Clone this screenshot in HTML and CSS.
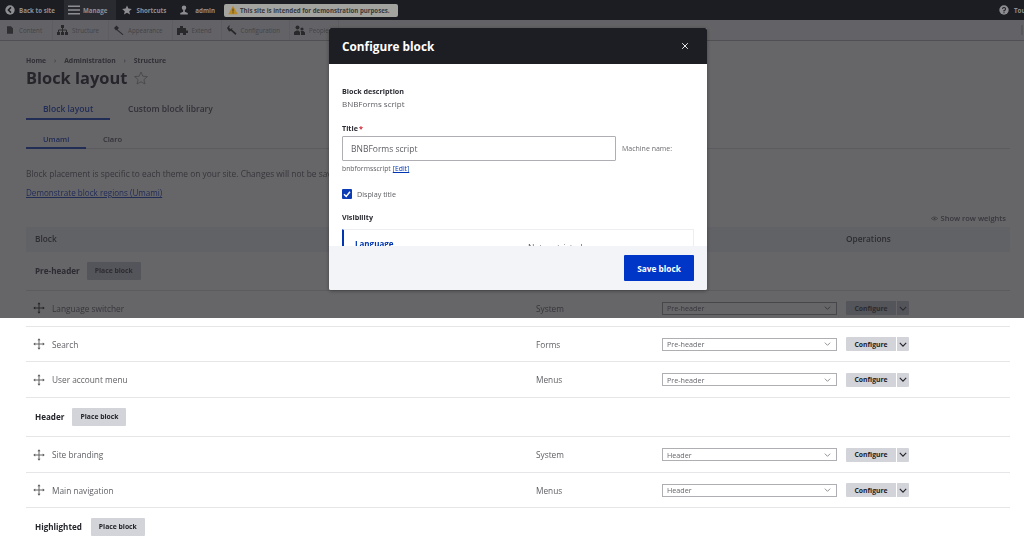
FILE: index.html
```html
<!DOCTYPE html>
<html lang="en">
<head>
<meta charset="utf-8">
<title>Block layout</title>
<link rel="stylesheet" href="styles.css">
</head>
<body>
<svg class="defs" width="0" height="0" aria-hidden="true">
  <symbol id="move" viewBox="0 0 12 12"><path d="M6 .3 7.500 2.200H4.500ZM6 11.700 4.500 9.800H7.500ZM.3 6 2.200 4.500V7.500ZM11.700 6 9.800 7.500V4.500Z" fill="#555"/><path d="M6 2V10M2 6H10" stroke="#555" stroke-width=".9"/></symbol>
  <symbol id="chev" viewBox="0 0 10 6"><path d="M1 1 5 5 9 1" fill="none" stroke="currentColor" stroke-width="1.400"/></symbol>
</svg>

<nav class="topbar">
  <a class="top-item top-back"><svg class="ti" viewBox="0 0 10 10"><circle cx="5" cy="5" r="4.700" fill="#8e8e92"/><path d="M6 2.400 3.400 5 6 7.600" fill="none" stroke="#1c1d22" stroke-width="1.500"/></svg>Back to site</a>
  <a class="top-item top-active"><svg class="ti ti-wide" viewBox="0 0 12 10"><path d="M0 1.200H12M0 5H12M0 8.800H12" stroke="#8e8e92" stroke-width="1.600"/></svg>Manage</a>
  <a class="top-item"><svg class="ti ti-wide" viewBox="0 0 12 12"><path d="M6 .5 7.700 4.300 11.800 4.700 8.700 7.400 9.600 11.500 6 9.400 2.400 11.500 3.300 7.400.2 4.700 4.300 4.300Z" fill="#8e8e92"/></svg>Shortcuts</a>
  <a class="top-item top-user"><svg class="ti ti-wide" viewBox="0 0 12 12"><circle cx="6" cy="3.200" r="2.700" fill="#8e8e92"/><path d="M5 5.500H7V8L10.500 9.500V11.500H1.500V9.500L5 8Z" fill="#8e8e92"/></svg>admin</a>
  <div class="demo-note"><svg class="warn" viewBox="0 0 12 11"><path d="M6 .4 11.700 10.600H.3Z" fill="#b88a2a"/><path d="M6 3.800V7.400M6 8.300V9.500" stroke="#3a2e10" stroke-width="1"/></svg>This site is intended for demonstration purposes.</div>
  <a class="tour"><svg class="ti" viewBox="0 0 10 10"><circle cx="5" cy="5" r="4.700" fill="#8e8e92"/><path d="M3.500 3.900A1.500 1.500 0 1 1 5 5.500V6.400M5 7.200V8.200" fill="none" stroke="#1c1d22" stroke-width="1.100"/></svg>Tour</a>
</nav>

<nav class="adminbar">
  <a class="admin-item"><svg class="ai ai-narrow" viewBox="0 0 7 9"><path d="M0 0H4.500L7 2.500V9H0Z" fill="#777"/></svg>Content</a>
  <a class="admin-item"><svg class="ai" viewBox="0 0 11 10"><path d="M5.500 2V5M1.500 8V5H9.500V8M5.500 5V8" fill="none" stroke="#666" stroke-width="1"/><rect x="4" width="3" height="3" fill="#666"/><rect y="7" width="3" height="3" fill="#666"/><rect x="4" y="7" width="3" height="3" fill="#666"/><rect x="8" y="7" width="3" height="3" fill="#666"/></svg>Structure</a>
  <a class="admin-item"><svg class="ai" viewBox="0 0 11 10"><path d="M1 3 3.500 .5 6 3 4.500 4.500 10.500 9.500 9.500 10 3.500 5 3 5.500Z" fill="#666"/></svg>Appearance</a>
  <a class="admin-item"><svg class="ai" viewBox="0 0 11 10"><path d="M0 3H3V1H6V3H9V5.500H11V8H9V10H6V8H3V10H0Z" fill="#666"/></svg>Extend</a>
  <a class="admin-item"><svg class="ai" viewBox="0 0 11 10"><path d="M1 3 3 .5 4 .5 3 2.500 4.500 4 6.500 3 6 4.500 10.500 8.500 9.500 10 5 6 3 6.500Z" fill="#666"/></svg>Configuration</a>
  <a class="admin-item"><svg class="ai" viewBox="0 0 11 10"><circle cx="3.500" cy="2.500" r="2" fill="#666"/><circle cx="8" cy="4" r="1.600" fill="#666"/><path d="M0 10V7L2.500 5.500H4.500L6 7V10ZM7 10V7L6.500 6H9.500L11 7.500V10Z" fill="#666"/></svg>People</a>
  <span class="admin-end"></span>
</nav>

<main class="page">
  <ol class="crumbs"><li>Home</li><li class="sep">›</li><li>Administration</li><li class="sep">›</li><li>Structure</li></ol>
  <h1 class="page-title">Block layout <svg class="fav" viewBox="0 0 14 14"><path d="M7 1 8.800 5.200 13.400 5.600 9.900 8.600 11 13 7 10.700 3 13 4.100 8.600.6 5.600 5.200 5.200Z" fill="none" stroke="#aaa" stroke-width=".8"/></svg></h1>
  <div class="tabs"><a class="tab tab-on">Block layout</a><a class="tab">Custom block library</a></div>
  <div class="subtabs"><a class="subtab subtab-on">Umami</a><a class="subtab">Claro</a></div>
  <p class="intro">Block placement is specific to each theme on your site. Changes will not be saved until you click Save blocks at the bottom of the page.</p>
  <p class="demo-link"><a>Demonstrate block regions (Umami)</a></p>
  <div class="weights"><svg class="eye" viewBox="0 0 10 6"><path d="M.5 3C2.500.2 7.500.2 9.500 3 7.500 5.800 2.500 5.800.5 3Z" fill="none" stroke="#8a8a90" stroke-width="1"/><circle cx="5" cy="3" r="1.200" fill="#8a8a90"/></svg>Show row weights</div>

  <div class="thead"><span>Block</span><span></span><span></span><span>Operations</span></div>

  <div class="region region-dim"><strong>Pre-header</strong><a class="place">Place block</a></div>
  <div class="row r-first">
    <span class="name"><svg class="handle"><use href="#move"/></svg>Language switcher</span><span>System</span>
    <span class="select">Pre-header<svg class="chev"><use href="#chev"/></svg></span>
    <span class="ops"><a class="op-main">Configure</a><a class="op-more"><svg class="chev-b"><use href="#chev"/></svg></a></span>
  </div>
  <div class="row">
    <span class="name"><svg class="handle"><use href="#move"/></svg>Search</span><span>Forms</span>
    <span class="select">Pre-header<svg class="chev"><use href="#chev"/></svg></span>
    <span class="ops"><a class="op-main">Configure</a><a class="op-more"><svg class="chev-b"><use href="#chev"/></svg></a></span>
  </div>
  <div class="row r-tall">
    <span class="name"><svg class="handle"><use href="#move"/></svg>User account menu</span><span>Menus</span>
    <span class="select">Pre-header<svg class="chev"><use href="#chev"/></svg></span>
    <span class="ops"><a class="op-main">Configure</a><a class="op-more"><svg class="chev-b"><use href="#chev"/></svg></a></span>
  </div>
  <div class="region"><strong>Header</strong><a class="place">Place block</a></div>
  <div class="row r-tall">
    <span class="name"><svg class="handle"><use href="#move"/></svg>Site branding</span><span>System</span>
    <span class="select">Header<svg class="chev"><use href="#chev"/></svg></span>
    <span class="ops"><a class="op-main">Configure</a><a class="op-more"><svg class="chev-b"><use href="#chev"/></svg></a></span>
  </div>
  <div class="row">
    <span class="name"><svg class="handle"><use href="#move"/></svg>Main navigation</span><span>Menus</span>
    <span class="select">Header<svg class="chev"><use href="#chev"/></svg></span>
    <span class="ops"><a class="op-main">Configure</a><a class="op-more"><svg class="chev-b"><use href="#chev"/></svg></a></span>
  </div>
  <div class="region region-last"><strong>Highlighted</strong><a class="place">Place block</a></div>
</main>

<div class="overlay"></div>

<section class="modal">
  <header class="modal-head"><h2>Configure block</h2><svg class="close" viewBox="0 0 8 8"><path d="M1.200 1.200 6.800 6.800M6.800 1.200 1.200 6.800" stroke="#e8e8ea" stroke-width="1"/></svg></header>
  <div class="modal-body">
    <div class="f-label">Block description</div>
    <div class="f-value">BNBForms script</div>
    <div class="f-label f-title">Title<span class="req">*</span></div>
    <div class="title-row"><div class="input">BNBForms script</div><span class="machine">Machine name:</span></div>
    <div class="machine-val"><span>bnbformsscript</span><a>[Edit]</a></div>
    <div class="check-row"><span class="check"><svg viewBox="0 0 10 10"><path d="M2 5.200 4.200 7.400 8 2.800" fill="none" stroke="#fff" stroke-width="1.500"/></svg></span>Display title</div>
    <div class="f-label f-vis">Visibility</div>
    <div class="vis-box"><a class="vis-tab">Language</a><span class="vis-sum">Not restricted</span></div>
  </div>
  <footer class="modal-foot"><a class="save">Save block</a></footer>
</section>
</body>
</html>
```
FILE: styles.css
```css
* { box-sizing: border-box; }
html, body { margin: 0; height: 544px; overflow: hidden; }
body { position: relative; background: #fff; font-family: "Open Sans", "Noto Sans", sans-serif; font-size: 8.3px; color: #606166; font-variant-ligatures: none; filter: blur(.5px); }
.defs { position: absolute; }
a { color: inherit; text-decoration: none; }

/* toolbar */
.topbar { height: 20px; background: #1c1d22; display: flex; align-items: center; font-size: 6.2px; font-weight: 700; color: #909094; white-space: nowrap; overflow: hidden; }
.top-item { display: flex; align-items: center; height: 20px; gap: 3px; padding: 0 7px 0 5px; }
.top-back { gap: 4px; padding-right: 9px; }
.top-active { background: #2a2b30; padding: 0 9px 0 4px; }
.top-user { gap: 5px; }
.ti { width: 10px; height: 10px; flex: none; }
.ti-wide { width: 12px; }
.demo-note { display: flex; align-items: center; gap: 2px; height: 13px; width: 174px; margin-left: 2px; padding-left: 4px; background: #a3a39f; border-radius: 2px; font-size: 6.1px; color: #3a3a3c; flex: none; }
.warn { width: 10px; height: 10px; flex: none; }
.tour { margin-left: auto; margin-right: -6px; width: 31px; display: flex; align-items: center; gap: 5px; flex: none; }

.adminbar { height: 21px; background: #f8f8fa; border-bottom: 1px solid #c8c8ca; display: flex; align-items: center; font-size: 6.2px; color: #a8a8ac; white-space: nowrap; }
.admin-item { display: flex; align-items: center; gap: 4px; height: 20px; padding: 0 9px 0 4px; border-right: 1px solid #ececee; }
.admin-item:first-child { padding: 0 10px 0 7px; gap: 6px; }
.ai { width: 11px; height: 10px; flex: none; }
.ai-narrow { width: 6px; height: 8px; }
.admin-end { margin-left: auto; margin-right: 1px; width: 2px; height: 10px; background: #ddd; }

/* page */
.page { padding: 0 14px 0 26px; }
.crumbs { list-style: none; margin: 13px 0 0; padding: 0; height: 12px; display: flex; align-items: center; gap: 8px; font-size: 6.8px; font-weight: 700; color: #78797e; }
.crumbs .sep { font-weight: 400; }
.page-title { margin: 0; height: 24px; display: flex; align-items: center; gap: 7px; font-size: 16.4px; line-height: 24px; font-weight: 700; color: #5c5d63; }
.fav { width: 14px; height: 14px; }
.tabs { margin-top: 9px; height: 21px; display: flex; gap: 18px; font-size: 8.5px; font-weight: 600; }
.tab { height: 21px; padding: 4px 0 0; color: #7a7b82; }
.tab-on { width: 84px; padding-left: 17px; color: #5570d0; border-bottom: 2px solid #5570d0; }
.subtabs { margin-top: 9px; height: 20px; display: flex; gap: 17px; border-bottom: 1px solid #e4e4e8; font-size: 7.5px; font-weight: 600; }
.subtab { height: 20px; padding: 5px 0 0; color: #7a7b82; }
.subtab-on { width: 60px; padding-left: 17px; color: #5570d0; border-bottom: 2px solid #5570d0; }
.intro { margin: 18px 0 0; height: 14px; line-height: 14px; white-space: nowrap; overflow: hidden; font-size: 8.4px; color: #88888e; }
.demo-link { margin: 5px 0 0; height: 14px; line-height: 14px; font-size: 8.1px; color: #5570d0; text-decoration: underline; }
.weights { margin-top: 11px; height: 14px; padding-right: 4px; display: flex; justify-content: flex-end; align-items: center; gap: 3px; font-size: 7.5px; font-weight: 600; color: #8a8a90; }
.eye { width: 7px; height: 5px; }

.thead, .row { display: grid; grid-template-columns: 510px 126px 184px 1fr; align-items: center; }
.thead { margin-top: 2px; height: 25px; padding: 0 0 2px 9px; grid-template-columns: 501px 126px 184px 1fr; background: #f3f4f8; font-size: 8.3px; font-weight: 600; color: #6e6f75; }
.region { height: 39px; display: flex; align-items: center; padding: 0 0 1px 9px; gap: 8px; border-bottom: 1px solid #e6e6e9; font-size: 8.1px; color: #25262c; }
.region strong { font-weight: 700; }
.region-dim { color: #6e6f75; gap: 7px; }
.region-dim .place { color: #6e6f75; }
.region-last { gap: 9px; }
.row { height: 35px; border-bottom: 1px solid #e6e6e9; font-size: 8.3px; }
.r-first { height: 36px; padding-bottom: 1px; color: #88888e; }
.r-first .select { color: #88888e; }
.r-first .op-main, .r-first .chev-b { color: #6e6f75; }
.r-tall { height: 36px; }
.name { display: flex; align-items: center; gap: 7px; padding-left: 7px; }
.handle { width: 12px; height: 12px; flex: none; }
.place { height: 18px; width: 54px; display: flex; align-items: center; justify-content: center; background: #d3d4d9; border-radius: 1px; font-size: 6.8px; font-weight: 700; color: #222329; }
.select { width: 175px; height: 13px; padding: 0 5px 0 4px; display: flex; align-items: center; justify-content: space-between; border: 1px solid #aeaeb3; background: #fff; font-size: 7.2px; color: #66676c; }
.chev { width: 7px; height: 4px; color: #8a8a8f; }
.ops { display: flex; height: 14px; color: #222329; }
.op-main { width: 50px; display: flex; align-items: center; justify-content: center; background: #d3d4d9; border-radius: 1px 0 0 1px; font-size: 6.8px; font-weight: 700; }
.op-more { width: 12px; margin-left: 1px; display: flex; align-items: center; justify-content: center; background: #d3d4d9; border-radius: 0 1px 1px 0; }
.chev-b { width: 8px; height: 5px; color: #22232a; }

/* dialog */
.overlay { position: absolute; left: 0; right: 0; top: 20px; height: 298px; background: rgba(0, 0, 5, .6); }
.modal { position: absolute; left: 329px; top: 28px; width: 378px; height: 262px; display: flex; flex-direction: column; background: #fff; border-radius: 2px; box-shadow: 0 1px 4px rgba(0, 0, 0, .35); overflow: hidden; }
.modal-head { height: 36px; flex: none; display: flex; align-items: center; justify-content: space-between; padding: 0 18px 0 13px; background: #1d1e24; }
.modal-head h2 { margin: 0; font-size: 11.8px; font-weight: 700; color: #fff; }
.close { width: 8px; height: 8px; }
.modal-body { flex: 1; min-height: 0; overflow: hidden; padding: 21px 13px 0; }
.f-label { height: 12px; line-height: 12px; font-size: 7.2px; font-weight: 700; color: #2b2c33; }
.f-value { height: 13px; line-height: 13px; font-size: 8px; color: #606166; }
.f-title { margin-top: 12px; }
.req { color: #d0202e; margin-left: 1px; }
.title-row { margin-top: 2px; display: flex; align-items: center; gap: 6px; }
.input { width: 274px; height: 25px; padding: 0 8px; display: flex; align-items: center; border: 1px solid #aeaeb3; border-radius: 1px; font-size: 8.5px; color: #606166; }
.machine { font-size: 7px; color: #6b6c70; }
.machine-val { margin-top: 2px; height: 11px; display: flex; align-items: center; gap: 2px; font-size: 6.8px; color: #606166; }
.machine-val a { color: #0036b1; text-decoration: underline; }
.check-row { margin-top: 14px; height: 11px; display: flex; align-items: center; gap: 5px; font-size: 7.2px; color: #606166; }
.check { width: 10px; height: 10px; display: block; background: #0b3bb5; border-radius: 1px; }
.check svg { display: block; }
.f-vis { margin-top: 12px; }
.vis-box { margin-top: 6px; height: 40px; position: relative; padding: 8px 0 0 11px; border: 1px solid #eceef2; border-left: 2px solid #0036b1; border-radius: 1px; }
.vis-tab { font-size: 8px; font-weight: 700; color: #0036b1; }
.vis-sum { position: absolute; left: 184px; top: 12px; font-size: 8.5px; color: #606166; }
.modal-foot { flex: none; height: 44px; display: flex; justify-content: flex-end; align-items: center; padding-right: 13px; background: #f3f4f8; }
.save { width: 70px; height: 26px; display: flex; align-items: center; justify-content: center; background: #0036c8; border-radius: 1px; font-size: 8.3px; font-weight: 700; color: #fff; }
```
